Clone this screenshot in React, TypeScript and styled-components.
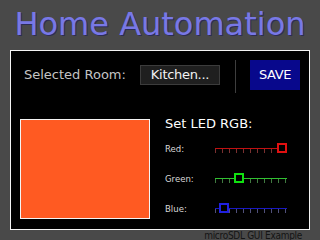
import React from "react";
import styled, { createGlobalStyle } from "styled-components";

const Global = createGlobalStyle`
  html, body { margin: 0; padding: 0; background: #494949; }
  body { font-family: "DejaVu Sans", sans-serif; }
`;

const Screen = styled.div`
  width: 320px;
  height: 240px;
  background: #494949;
  overflow: hidden;
  display: flex;
  flex-direction: column;
`;

const Title = styled.h1`
  margin: 0;
  height: 50px;
  box-sizing: border-box;
  padding-top: 8px;
  font-family: "DejaVu Sans", sans-serif;
  font-weight: normal;
  font-size: 32px;
  line-height: 32px;
  text-align: center;
  color: #7878e6;
  text-shadow: 1px 1px 0 #2c2c58;
  white-space: nowrap;
`;

const Panel = styled.div`
  margin: 0 10px;
  width: 300px;
  height: 180px;
  box-sizing: border-box;
  border: 1px solid #f4f4f4;
  background: #000;
  display: flex;
  flex-direction: column;
`;

const TopRow = styled.div`
  display: flex;
  align-items: flex-start;
  padding: 9px 0 0 13px;
`;

const RoomLabel = styled.span`
  width: 116px;
  font-size: 13px;
  line-height: 30px;
  color: #c4c4c4;
  white-space: nowrap;
`;

const RoomBox = styled.div`
  margin-top: 5px;
  width: 80px;
  height: 20px;
  box-sizing: border-box;
  background: #1f1f1f;
  border: 1px solid #3c3c3c;
  color: #f2f2f2;
  font-size: 13px;
  line-height: 18px;
  letter-spacing: -0.3px;
  text-align: center;
  white-space: nowrap;
`;

const VSep = styled.div`
  margin: 0 14px 0 15px;
  width: 1px;
  height: 33px;
  background: #3e3e3e;
`;

const SaveButton = styled.button`
  width: 50px;
  height: 30px;
  padding: 0;
  border: none;
  background: #08088c;
  color: #ffffff;
  font-family: "DejaVu Sans", sans-serif;
  font-size: 13px;
  letter-spacing: -0.4px;
  line-height: 30px;
`;

const HLine = styled.div`
  margin: 7px 0 0 9px;
  width: 278px;
  height: 1px;
  background: #4a4a4a;
`;

const Body = styled.div`
  display: flex;
  align-items: flex-start;
  padding-left: 9px;
`;

const Swatch = styled.div<{ $color: string }>`
  margin-top: 19px;
  width: 130px;
  height: 100px;
  box-sizing: border-box;
  border: 1px solid #f4f4f4;
  background: ${(p) => p.$color};
`;

const Controls = styled.div`
  margin-left: 15px;
  padding-top: 16px;
  display: flex;
  flex-direction: column;
`;

const Heading = styled.div`
  font-size: 13px;
  line-height: 16px;
  color: #ffffff;
  margin-bottom: 11px;
  white-space: nowrap;
`;

const SliderRow = styled.div`
  display: flex;
  align-items: center;
  height: 10px;
  margin-bottom: 20px;
`;

const SliderLabel = styled.span`
  width: 50px;
  font-family: "DejaVu Sans Condensed", "DejaVu Sans", sans-serif;
  font-stretch: condensed;
  font-size: 9.5px;
  color: #d8d8d8;
  white-space: nowrap;
`;

const Track = styled.div<{ $line: string; $tick: string }>`
  position: relative;
  width: 72px;
  height: 10px;
  background:
    linear-gradient(${(p) => p.$line}, ${(p) => p.$line}) 0 5px / 72px 1px no-repeat,
    repeating-linear-gradient(to right, ${(p) => p.$tick} 0 1px, transparent 1px 7px) 0 6px / 71px 4px no-repeat;
`;

const Thumb = styled.div<{ $color: string }>`
  position: absolute;
  top: 0;
  width: 10px;
  height: 10px;
  box-sizing: border-box;
  border: 2px solid ${(p) => p.$color};
  background: #000;
`;

const Footer = styled.div`
  height: 10px;
  padding-right: 18px;
  text-align: right;
  font-family: "DejaVu Sans Condensed", "DejaVu Sans", sans-serif;
  font-stretch: condensed;
  font-size: 10px;
  line-height: 12px;
  letter-spacing: -0.3px;
  color: #141414;
  white-space: nowrap;
`;

type SliderProps = { label: string; value: number; thumb: string; line: string; tick: string };

function Slider({ label, value, thumb, line, tick }: SliderProps) {
  return (
    <SliderRow>
      <SliderLabel>{label}</SliderLabel>
      <Track $line={line} $tick={tick}>
        <Thumb $color={thumb} style={{ left: `${Math.round(value * 62)}px` }} />
      </Track>
    </SliderRow>
  );
}

export default function App() {
  return (
    <Screen>
      <Global />
      <Title>Home Automation</Title>
      <Panel>
        <TopRow>
          <RoomLabel>Selected Room:</RoomLabel>
          <RoomBox>Kitchen...</RoomBox>
          <VSep />
          <SaveButton>SAVE</SaveButton>
        </TopRow>
        <HLine />
        <Body>
          <Swatch $color="#ff5a22" />
          <Controls>
            <Heading>Set LED RGB:</Heading>
            <Slider label="Red:" value={1} thumb="#e01010" line="#c01010" tick="#7a3030" />
            <Slider label="Green:" value={0.306} thumb="#10e010" line="#30c030" tick="#407a40" />
            <Slider label="Blue:" value={0.065} thumb="#2020e0" line="#1818c0" tick="#50507a" />
          </Controls>
        </Body>
      </Panel>
      <Footer>microSDL GUI Example</Footer>
    </Screen>
  );
}
